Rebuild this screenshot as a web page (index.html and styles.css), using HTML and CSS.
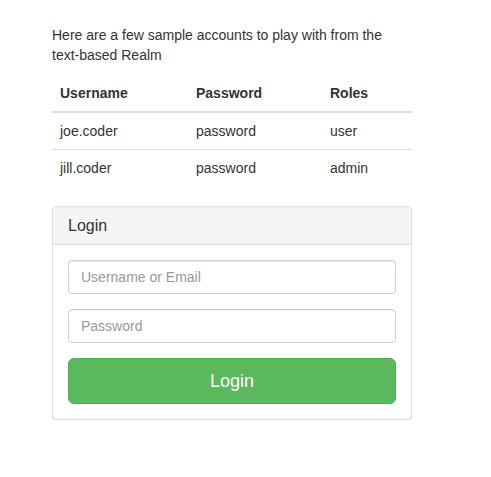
FILE: index.html
```html
<!DOCTYPE html>
<html>
<head>
<meta charset="utf-8">
<link rel="stylesheet" href="styles.css">
</head>
<body>
<div class="wrap">
  <p class="intro">Here are a few sample accounts to play with from the text-based Realm</p>
  <table class="accounts">
    <thead>
      <tr><th class="c1">Username</th><th class="c2">Password</th><th>Roles</th></tr>
    </thead>
    <tbody>
      <tr><td>joe.coder</td><td>password</td><td>user</td></tr>
      <tr><td>jill.coder</td><td>password</td><td>admin</td></tr>
    </tbody>
  </table>
  <div class="panel">
    <div class="panel-heading"><h3 class="panel-title">Login</h3></div>
    <div class="panel-body">
      <div class="form-group"><input class="form-control" type="text" placeholder="Username or Email"></div>
      <div class="form-group"><input class="form-control" type="password" placeholder="Password"></div>
      <button class="btn-login" type="button">Login</button>
    </div>
  </div>
</div>
</body>
</html>
```
FILE: styles.css
```css
* { box-sizing: border-box; }
html, body { margin: 0; padding: 0; background: #fff; }
body {
  font-family: "Liberation Sans", Arial, Helvetica, sans-serif;
  font-size: 14px;
  line-height: 20px;
  color: #333;
}
.wrap {
  width: 360px;
  margin-left: 52px;
  padding-top: 25px;
}
.intro { margin: 0 0 10px; }
.accounts {
  width: 100%;
  border-collapse: collapse;
  border-spacing: 0;
  margin-bottom: 20px;
}
.accounts th, .accounts td {
  padding: 8px;
  line-height: 20px;
  text-align: left;
  vertical-align: top;
}
.accounts th {
  font-weight: bold;
  border-bottom: 2px solid #ddd;
}
.accounts tbody tr + tr td { border-top: 1px solid #ddd; }
.accounts .c1 { width: 136px; }
.accounts .c2 { width: 134px; }
.panel {
  border: 1px solid #ddd;
  border-radius: 4px;
  background: #fff;
  box-shadow: 0 1px 1px rgba(0,0,0,0.05);
}
.panel-heading {
  background: #f5f5f5;
  border-bottom: 1px solid #ddd;
  padding: 10px 15px;
  border-radius: 3px 3px 0 0;
}
.panel-title {
  margin: 0;
  font-size: 16px;
  font-weight: normal;
  line-height: 17px;
  color: #333;
}
.panel-body { padding: 15px; }
.form-group { margin-bottom: 15px; }
.form-control {
  display: block;
  width: 100%;
  height: 34px;
  padding: 6px 12px;
  font-family: inherit;
  font-size: 14px;
  line-height: 20px;
  color: #555;
  background: #fff;
  border: 1px solid #ccc;
  border-radius: 4px;
  box-shadow: inset 0 1px 1px rgba(0,0,0,0.075);
  outline: none;
}
.form-control::placeholder { color: #999; }
.btn-login {
  display: block;
  width: 100%;
  padding: 10px 16px;
  font-family: inherit;
  font-size: 18px;
  line-height: 24px;
  color: #fff;
  background: #5cb85c;
  border: 1px solid #4cae4c;
  border-radius: 6px;
  text-align: center;
}
```
